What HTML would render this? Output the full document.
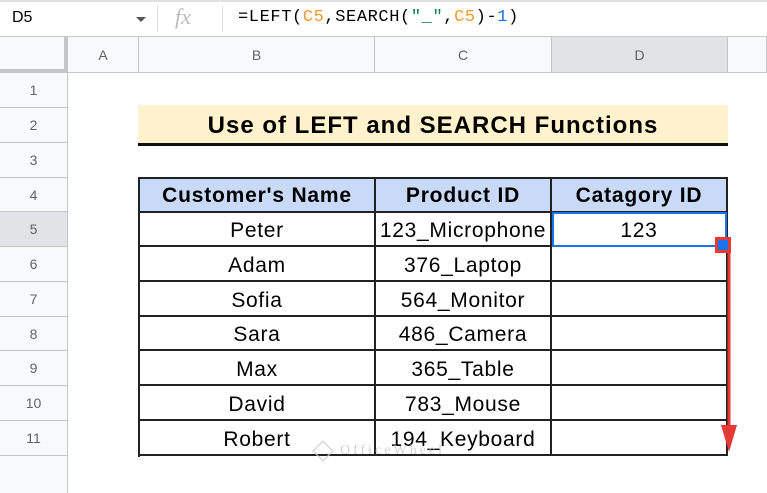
<!DOCTYPE html>
<html><head><meta charset="utf-8"><style>
*{margin:0;padding:0;box-sizing:border-box}
body{width:767px;height:493px;overflow:hidden;background:#fff;font-family:"Liberation Sans",Arial,sans-serif;position:relative}
.a{position:absolute}
.rh{position:absolute;left:0;width:68px;background:#f8f9fa;border-bottom:1px solid #c4c7c5;border-right:1px solid #c4c7c5;color:#5f6368;font-size:14px;text-align:center}
.ch{position:absolute;top:37px;height:36px;line-height:36px;background:#f8f9fa;border-right:1px solid #c4c7c5;border-bottom:1px solid #c4c7c5;color:#5f6368;font-size:14px;text-align:center}
.c{position:absolute;font-size:21px;letter-spacing:0.7px;text-align:center;color:#000;border-right:2px solid #222;border-bottom:2px solid #222}
</style></head><body>
<div class="a" style="left:0;top:0;width:767px;height:37px;border-top:2px solid #e0e0e0;border-bottom:1px solid #c4c7c5;background:#fff"></div>
<div class="a" style="left:12px;top:9px;font-size:16px;color:#000">D5</div>
<div class="a" style="left:136px;top:17px;width:0;height:0;border-left:5px solid transparent;border-right:5px solid transparent;border-top:5px solid #555"></div>
<div class="a" style="left:157px;top:6px;width:1px;height:26px;background:#ddd"></div>
<div class="a" style="left:175px;top:4px;font-size:22px;color:#bbb;font-style:italic;font-family:'Liberation Serif',serif">fx</div>
<div class="a" style="left:222px;top:6px;width:1px;height:26px;background:#ddd"></div>
<div class="a" style="left:238px;top:8px;font-size:17px;letter-spacing:0.6px;font-family:'Liberation Mono',monospace;color:#000">=LEFT(<span style="color:#f09a2c">C5</span>,SEARCH(<span style="color:#0b8043">"_"</span>,<span style="color:#f09a2c">C5</span>)-<span style="color:#1a73e8">1</span>)</div>
<div class="a" style="left:0;top:37px;width:68px;height:36px;background:#f8f9fa;border-right:4px solid #c4c7c5;border-bottom:4px solid #c4c7c5"></div>
<div class="ch" style="left:68px;width:71px">A</div>
<div class="ch" style="left:139px;width:236px">B</div>
<div class="ch" style="left:375px;width:177px">C</div>
<div class="ch" style="left:552px;width:176px;background:#e1e3e7">D</div>
<div class="ch" style="left:728px;width:39px"></div>
<div class="rh" style="top:73px;height:35px;line-height:35px">1</div>
<div class="rh" style="top:108px;height:35px;line-height:35px">2</div>
<div class="rh" style="top:143px;height:35px;line-height:35px">3</div>
<div class="rh" style="top:178px;height:34px;line-height:34px">4</div>
<div class="rh" style="top:212px;height:35px;line-height:35px;background:#e1e3e7">5</div>
<div class="rh" style="top:247px;height:35px;line-height:35px">6</div>
<div class="rh" style="top:282px;height:35px;line-height:35px">7</div>
<div class="rh" style="top:317px;height:34px;line-height:34px">8</div>
<div class="rh" style="top:351px;height:35px;line-height:35px">9</div>
<div class="rh" style="top:386px;height:35px;line-height:35px">10</div>
<div class="rh" style="top:421px;height:35px;line-height:35px">11</div>
<div class="rh" style="top:456px;height:37px;border-bottom:none"></div>
<div class="a" style="left:138px;top:105px;width:590px;height:41px;background:#fff2cc;border-bottom:3px solid #111;font-size:24px;letter-spacing:1px;font-weight:bold;text-align:center;line-height:42px">Use of LEFT and SEARCH Functions</div>
<div class="a" style="left:138px;top:177px;width:590px;height:280px;border-left:2px solid #222;border-top:2px solid #222"></div>
<div class="c" style="left:140px;top:179px;width:236px;height:34px;line-height:34px;background:#c9daf8;font-weight:bold;letter-spacing:0.8px">Customer's Name</div>
<div class="c" style="left:376px;top:179px;width:176px;height:34px;line-height:34px;background:#c9daf8;font-weight:bold;letter-spacing:0.8px">Product ID</div>
<div class="c" style="left:552px;top:179px;width:176px;height:34px;line-height:34px;background:#c9daf8;font-weight:bold;letter-spacing:0.8px">Catagory ID</div>
<div id="rows"></div>
<script>
var d=[["Peter","123_Microphone","123"],["Adam","376_Laptop",""],["Sofia","564_Monitor",""],["Sara","486_Camera",""],["Max","365_Table",""],["David","783_Mouse",""],["Robert","194_Keyboard",""]];
var h="";var tops=[213,247,282,317,351,386,421,456];
for(var i=0;i<7;i++){var t=tops[i],hh=tops[i+1]-t;
h+='<div class="c" style="left:140px;top:'+t+'px;width:236px;height:'+hh+'px;line-height:'+(hh+2)+'px">'+d[i][0]+'</div>';
h+='<div class="c" style="left:376px;top:'+t+'px;width:176px;height:'+hh+'px;line-height:'+(hh+2)+'px">'+d[i][1]+'</div>';
h+='<div class="c" style="left:552px;top:'+t+'px;width:176px;height:'+hh+'px;line-height:'+(hh+2)+'px">'+d[i][2]+'</div>';}
document.getElementById("rows").innerHTML=h;
</script>
<div class="a" style="left:552px;top:212px;width:175px;height:35px;border:2px solid #1a73e8"></div>
<svg class="a" style="left:700px;top:230px" width="50" height="230">
<rect x="16.5" y="8.5" width="13" height="13" fill="#1a73e8" stroke="#e53935" stroke-width="3"/>
<line x1="29" y1="20" x2="29" y2="200" stroke="#e53935" stroke-width="3"/>
<polygon points="21,195 37,195 29,222" fill="#e53935"/>
</svg>
<div class="a" style="left:312px;top:440px;font-size:14px;color:#c8c8c8;letter-spacing:3px;font-family:'Liberation Serif',serif;opacity:.8"><span style="display:inline-block;width:22px;height:22px;border:2px solid #ccc;transform:rotate(45deg) scale(.7);vertical-align:middle;margin-right:6px"></span>OfficeWheel</div>
</body></html>
